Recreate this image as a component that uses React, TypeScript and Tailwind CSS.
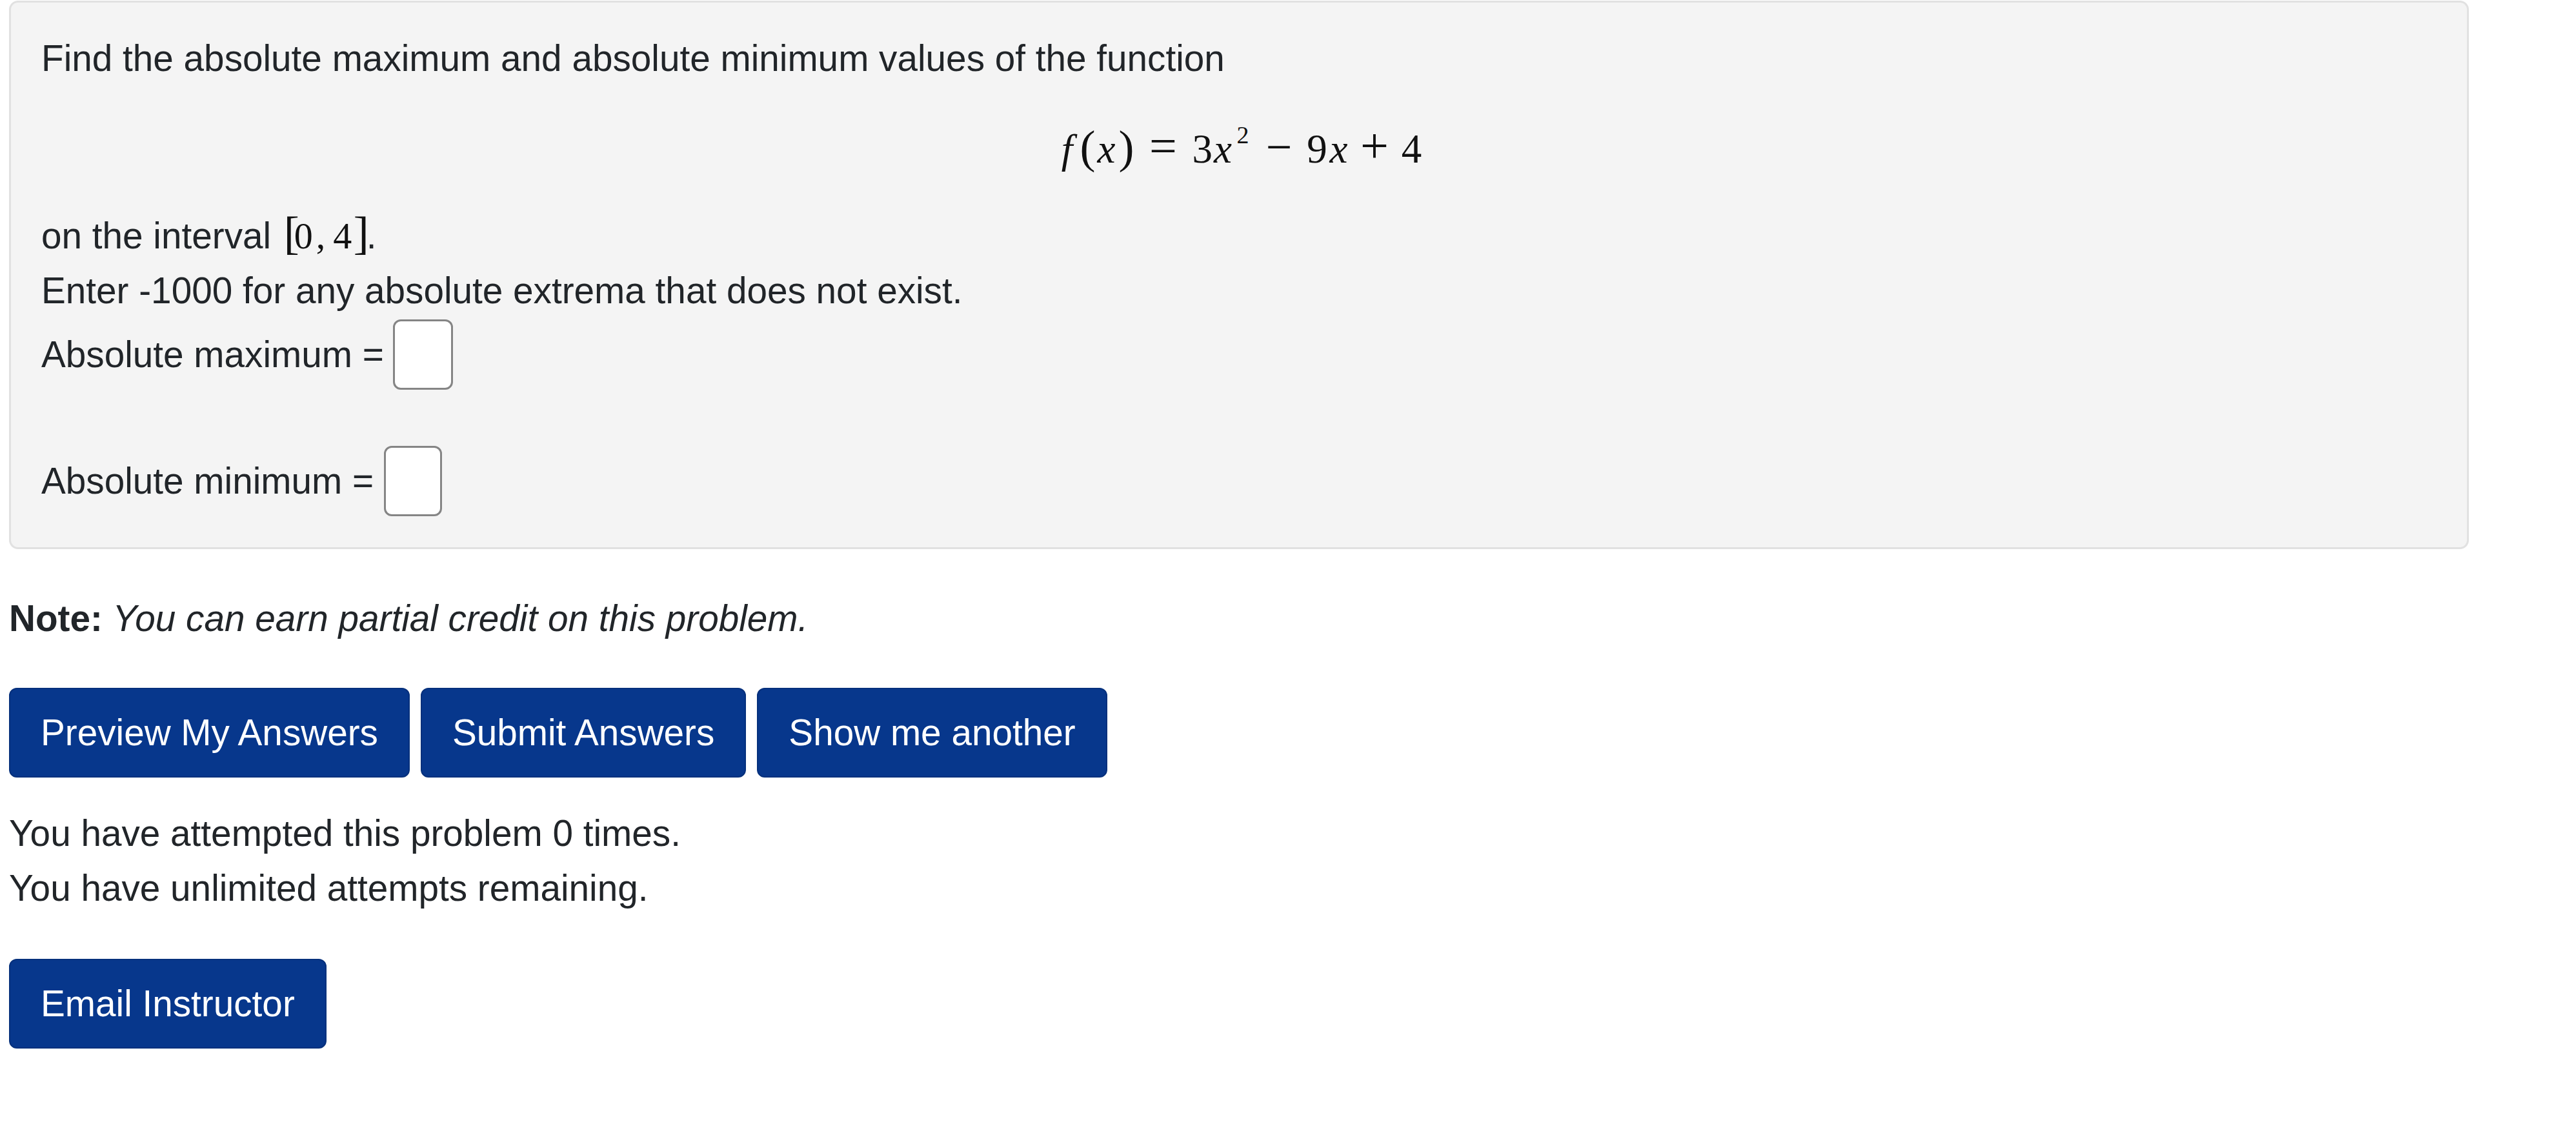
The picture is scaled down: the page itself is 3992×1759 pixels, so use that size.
import React from "react";

function Cell({ w, children, italic, size, lh }: { w: string; children: React.ReactNode; italic?: boolean; size?: string; lh?: string }) {
  return (
    <span className={`${w} inline-block text-center ${lh ?? "leading-[64px]"} ${italic ? "italic" : ""} ${size ?? ""}`}>
      {children}
    </span>
  );
}

function ICell({ w, children, big }: { w: string; children: React.ReactNode; big?: boolean }) {
  return (
    <span className={`${w} inline-block text-center leading-[60px] ${big ? "text-[72px]" : "text-[58px]"}`}>
      {children}
    </span>
  );
}

function Btn({ children }: { children: React.ReactNode }) {
  return (
    <button className="flex h-[139px] items-center rounded-[12px] border-[2px] border-[#05307c] bg-[#07378c] px-[47px] text-white">
      {children}
    </button>
  );
}

export default function App() {
  return (
    <div className="min-h-screen bg-white font-['Liberation_Sans',Arial,sans-serif] text-[56.7px] leading-[85px] text-[#212529]">
      <div className="pl-[14px] pt-[1px]">
        <div className="w-[3812px] rounded-[14px] border-[3px] border-[#e1e1e1] bg-[#f4f4f4] px-[47px] pt-[44px] pb-[48px]">
          <div>Find the absolute maximum and absolute minimum values of the function</div>
          <div className="mt-[63px] mb-[60px] text-center font-['Liberation_Serif','Times_New_Roman',serif] text-[63px] leading-[64px] text-[#111]">
            <Cell w="w-[40px]" italic>f</Cell>
            <Cell w="w-[22px]" size="text-[72px]">(</Cell>
            <Cell w="w-[38px]" italic>x</Cell>
            <Cell w="w-[24px]" size="text-[72px]">)</Cell>
            <Cell w="w-[90px]" size="text-[76px]" lh="leading-[50px]">=</Cell>
            <Cell w="w-[30px]">3</Cell>
            <Cell w="w-[35px]" italic>x</Cell>
            <span className="inline-block w-[27px] text-center leading-[64px]">
              <span className="align-[30px] text-[38px] leading-[0px]">2</span>
            </span>
            <Cell w="w-[85px]" size="text-[72px]" lh="leading-[50px]">−</Cell>
            <Cell w="w-[33px]">9</Cell>
            <Cell w="w-[34px]" italic>x</Cell>
            <Cell w="w-[77px]" size="text-[78px]" lh="leading-[50px]">+</Cell>
            <Cell w="w-[38px]">4</Cell>
          </div>
          <div>
            on the interval{" "}
            <span className="ml-[4px] font-['Liberation_Serif','Times_New_Roman',serif] text-[#111]">
              <ICell w="w-[16px]" big>[</ICell>
              <ICell w="w-[24px]">0</ICell>
              <ICell w="w-[34px]">
                <span className="inline-block w-full pl-[10px] text-left">,</span>
              </ICell>
              <ICell w="w-[34px]">4</ICell>
              <ICell w="w-[20px]" big>]</ICell>
            </span>
            .
          </div>
          <div>Enter -1000 for any absolute extrema that does not exist.</div>
          <div className="mt-[2px] flex h-[109px] items-center">
            <span>Absolute maximum =</span>
            <span className="ml-[14px] h-[109px] w-[93px] rounded-[12px] border-[3px] border-[#858585] bg-white" />
          </div>
          <div className="mt-[87px] flex h-[109px] items-center">
            <span>Absolute minimum =</span>
            <span className="ml-[16px] h-[109px] w-[90px] rounded-[12px] border-[3px] border-[#858585] bg-white" />
          </div>
        </div>

        <div className="mt-[65px]">
          <span className="font-bold">Note:</span> <span className="italic">You can earn partial credit on this problem.</span>
        </div>

        <div className="mt-[65px] flex gap-[17px]">
          <Btn>Preview My Answers</Btn>
          <Btn>Submit Answers</Btn>
          <Btn>Show me another</Btn>
        </div>

        <div className="mt-[44px]">You have attempted this problem 0 times.</div>
        <div>You have unlimited attempts remaining.</div>

        <div className="mt-[67px] flex">
          <Btn>Email Instructor</Btn>
        </div>
      </div>
    </div>
  );
}
